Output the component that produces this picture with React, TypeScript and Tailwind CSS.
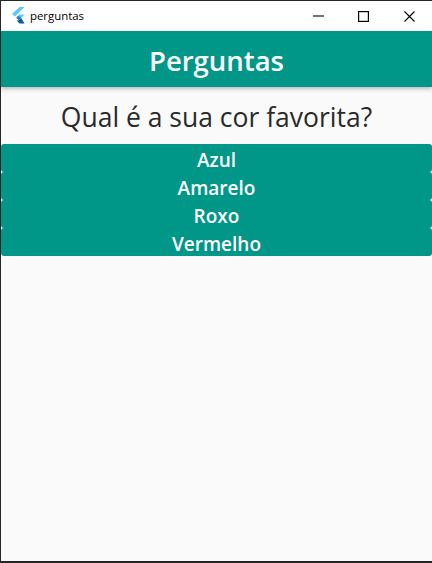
const answers = ["Azul", "Amarelo", "Roxo", "Vermelho"];

function FlutterLogo() {
  return (
    <svg width="14" height="17" viewBox="0 0 14 17">
      <path d="M8.5 0H13.5L4 9.6 1 7 8.5 0Z" fill="#5fc9f8" />
      <path d="M8.5 7.5H13.5L8 13.2 5.2 10.7 8.5 7.5Z" fill="#5fc9f8" />
      <path d="M5.2 10.7 7.5 8.5 10.2 11 8 13.2Z" fill="#2a80c8" />
      <path d="M8 13.2 10.2 11 13.5 16.5H8.5L5.6 13.4Z" fill="#0d5a9e" />
    </svg>
  );
}

export default function App() {
  return (
    <div className="flex h-[563px] w-[432px] flex-col overflow-hidden border-t border-b-2 border-l border-t-[#262626] border-b-[#262626] border-l-[#262626] bg-[#fafafa] font-['Open_Sans',sans-serif]">
      {/* barra da janela */}
      <div className="flex h-[30px] items-center justify-between bg-white pl-[10px]">
        <div className="flex items-center gap-[5px]">
          <FlutterLogo />
          <span className="text-[11.4px] text-black">perguntas</span>
        </div>
        <div className="flex items-center">
          <div className="flex w-[45px] justify-center">
            <svg width="11" height="11" viewBox="0 0 11 11">
              <path d="M0 5H11" stroke="#000" strokeWidth="1.1" />
            </svg>
          </div>
          <div className="flex w-[45px] justify-center">
            <svg width="11" height="11" viewBox="0 0 11 11">
              <rect x="0.6" y="0.6" width="9.8" height="9.8" fill="none" stroke="#000" strokeWidth="1.2" />
            </svg>
          </div>
          <div className="flex w-[46px] justify-center">
            <svg width="11" height="11" viewBox="0 0 11 11">
              <path d="M0.5 0.5 10.5 10.5M10.5 0.5 0.5 10.5" stroke="#000" strokeWidth="1.1" />
            </svg>
          </div>
        </div>
      </div>

      <div className="flex h-[56px] items-center justify-center bg-[#009688] pt-[3px] shadow-[0_2px_4px_rgba(0,0,0,0.25)]">
        <span className="text-[27.5px] font-semibold text-white">Perguntas</span>
      </div>

      <div className="flex h-[57px] items-center justify-center pt-[5px]">
        <span className="text-[26.5px] text-[#2a2a2a]">Qual é a sua cor favorita?</span>
      </div>

      <div className="flex flex-col">
        {answers.map((answer) => (
          <button
            key={answer}
            type="button"
            className="flex h-[28px] items-center justify-center rounded-[3px] bg-[#009688] pt-[5px] text-[19px] font-semibold text-white"
          >
            {answer}
          </button>
        ))}
      </div>
    </div>
  );
}
